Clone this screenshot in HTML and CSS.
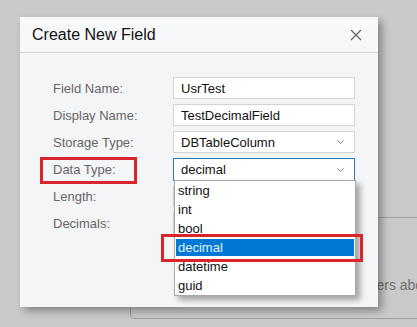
FILE: index.html
```html
<!DOCTYPE html>
<html lang="en">
<head>
    <meta charset="UTF-8">
    <title>Create New Field</title>
    <link rel="stylesheet" href="styles.css">
</head>
<body>

    <!-- Page behind the dialog -->
    <div class="page">
        <div class="panel">
            <span class="panel-text">others above</span>
        </div>
    </div>

    <section class="dialog">
        <header class="dialog-header">
            <h1 class="dialog-title">Create New Field</h1>
            <svg class="close" width="12" height="12" viewBox="0 0 12 12">
                <path d="M1 1 L11 11 M11 1 L1 11" stroke="#6b6b6b" stroke-width="1.4" fill="none"/>
            </svg>
        </header>

        <div class="form">
            <label class="label">Field Name:</label>
            <div class="input">UsrTest</div>

            <label class="label">Display Name:</label>
            <div class="input">TestDecimalField</div>

            <label class="label">Storage Type:</label>
            <div class="input select">
                DBTableColumn
                <svg class="chevron" width="7" height="4" viewBox="0 0 7 4"><path d="M0.5 0.5 L3.5 3.5 L6.5 0.5" stroke="#808080" fill="none"/></svg>
            </div>

            <label class="label">Data Type:</label>
            <div class="input select focused">
                decimal
                <svg class="chevron" width="7" height="4" viewBox="0 0 7 4"><path d="M0.5 0.5 L3.5 3.5 L6.5 0.5" stroke="#808080" fill="none"/></svg>
                <ul class="options">
                    <li>string</li>
                    <li>int</li>
                    <li>bool</li>
                    <li class="selected">decimal</li>
                    <li>datetime</li>
                    <li>guid</li>
                </ul>
            </div>

            <label class="label">Length:</label>
            <div class="input"></div>

            <label class="label">Decimals:</label>
            <div class="input"></div>
        </div>

        <!-- Markings -->
        <div class="mark mark-label"></div>
        <div class="mark mark-option"></div>
    </section>

</body>
</html>
```

FILE: styles.css
```css
html, body {
    margin: 0;
    padding: 0;
}

body {
    width: 417px;
    height: 327px;
    overflow: hidden;
    position: relative;
    background-color: #cacaca;
    font-family: "Liberation Sans", Arial, sans-serif;
}

/* Page behind */
.page {
    padding-top: 217px;
    padding-left: 130px;
}

.panel {
    width: 320px;
    height: 102px;
    box-sizing: border-box;
    border: 1px solid #a2a2a2;
    border-radius: 4px;
    padding: 58px 0 0 226px;
    white-space: nowrap;
}

.panel-text {
    font-size: 14px;
    color: #707070;
}

/* Dialog */
.dialog {
    position: absolute;
    left: 20px;
    top: 17px;
    width: 358px;
    height: 290px;
    background-color: #f4f5f7;
    box-shadow: 4px 4px 8px rgba(0, 0, 0, 0.35);
}

.dialog-header {
    height: 35px;
    display: flex;
    align-items: center;
    justify-content: space-between;
    padding: 0 16px 0 12px;
    background-color: #f7f8fa;
    border-bottom: 1px solid #d4d6d9;
}

.dialog-title {
    margin: 0;
    font-size: 16px;
    font-weight: normal;
    color: #111;
}

.form {
    display: grid;
    grid-template-columns: 120px 182px;
    grid-auto-rows: 22px;
    row-gap: 5px;
    padding: 24px 0 0 33px;
}

.label {
    display: flex;
    align-items: center;
    font-size: 13px;
    color: #666;
}

.input {
    position: relative;
    display: flex;
    align-items: center;
    justify-content: space-between;
    box-sizing: border-box;
    padding: 0 10px 0 7px;
    background-color: #fff;
    border: 1px solid #d3d3d3;
    font-size: 13px;
    color: #111;
}

.input.focused {
    height: 23px;
    border-color: #2a7bc4;
}

.chevron {
    flex: none;
}

/* Open list */
.options {
    position: absolute;
    top: 100%;
    left: 0;
    width: 182px;
    margin: 0;
    padding: 0;
    list-style: none;
    box-sizing: border-box;
    background-color: #fff;
    border: 1px solid #a9a9a9;
    box-shadow: 4px 4px 6px rgba(0, 0, 0, 0.35);
    z-index: 1;
}

.options li {
    height: 19px;
    line-height: 19px;
    padding-left: 3px;
    font-size: 13px;
    color: #111;
}

.options li.selected {
    background-color: #0078d4;
    color: #e8f6ff;
    outline: 1px solid #fff;
    outline-offset: -1px;
}

/* Red markings */
.mark {
    position: absolute;
    box-sizing: border-box;
    border: 3px solid #d8242a;
    z-index: 2;
}

.mark-label {
    left: 20px;
    top: 140px;
    width: 97px;
    height: 27px;
}

.mark-option {
    left: 141px;
    top: 217px;
    width: 202px;
    height: 28px;
}
```
